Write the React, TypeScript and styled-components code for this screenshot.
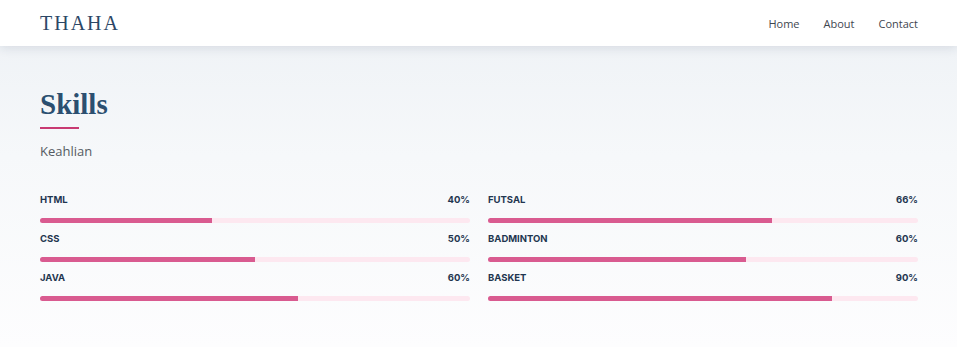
import styled, { createGlobalStyle } from 'styled-components';

// 스킬 목록 (bar 값은 화면에 보이는 막대 길이)
const SKILLS_LEFT = [
  { name: 'HTML', label: '40%', bar: 40 },
  { name: 'CSS', label: '50%', bar: 50 },
  { name: 'JAVA', label: '60%', bar: 60 },
];

const SKILLS_RIGHT = [
  { name: 'FUTSAL', label: '66%', bar: 66 },
  { name: 'BADMINTON', label: '60%', bar: 60 },
  { name: 'BASKET', label: '90%', bar: 80 },
];

const NAV_ITEMS = ['Home', 'About', 'Contact'];

const GlobalStyle = createGlobalStyle`
  html, body {
    margin: 0;
    padding: 0;
    background: #ffffff;
  }
  * {
    box-sizing: border-box;
  }
`;

function SkillColumn({ skills }: { skills: { name: string; label: string; bar: number }[] }) {
  return (
    <Column>
      {skills.map((skill) => (
        <SkillItem key={skill.name}>
          <SkillHead>
            <SkillName>{skill.name}</SkillName>
            <SkillValue>{skill.label}</SkillValue>
          </SkillHead>
          <Track>
            <Fill style={{ width: `${skill.bar}%` }} />
          </Track>
        </SkillItem>
      ))}
    </Column>
  );
}

export default function App() {
  return (
    <Page>
      <GlobalStyle />
      {/* 상단 헤더 */}
      <Header>
        <Logo>THAHA</Logo>
        <Nav>
          {NAV_ITEMS.map((item) => (
            <NavLink key={item}>{item}</NavLink>
          ))}
        </Nav>
      </Header>

      {/* 스킬 섹션 */}
      <Section>
        <Title>Skills</Title>
        <TitleLine />
        <Subtitle>Keahlian</Subtitle>
        <Grid>
          <SkillColumn skills={SKILLS_LEFT} />
          <SkillColumn skills={SKILLS_RIGHT} />
        </Grid>
      </Section>
    </Page>
  );
}

const Page = styled.div`
  width: 957px;
  height: 347px;
  background: linear-gradient(180deg, #edf1f5 0%, #f6f8fa 45%, #fdfdfe 100%);
  overflow: hidden;
`;

const Header = styled.header`
  position: relative;
  z-index: 1;
  height: 46px;
  display: flex;
  align-items: center;
  justify-content: space-between;
  padding: 0 39px 0 40px;
  background: #ffffff;
  box-shadow: 0 2px 10px rgba(30, 50, 80, 0.12);
`;

const Logo = styled.div`
  font-family: 'Liberation Serif', 'DejaVu Serif', serif;
  font-size: 20px;
  letter-spacing: 2px;
  color: #2c4766;
  margin-top: 1px;
`;

const Nav = styled.nav`
  display: flex;
  gap: 24px;
`;

const NavLink = styled.a`
  font-family: 'Open Sans', 'Noto Sans', sans-serif;
  font-size: 11px;
  color: #3f4650;
  cursor: pointer;
`;

const Section = styled.section`
  padding: 40px 40px 0 40px;
`;

const Title = styled.h2`
  margin: 0;
  font-family: 'Liberation Serif', 'DejaVu Serif', serif;
  font-weight: 700;
  font-size: 29px;
  line-height: 36px;
  color: #2b4f70;
`;

const TitleLine = styled.div`
  width: 39px;
  height: 2px;
  margin-top: 5px;
  background: #c83a72;
`;

const Subtitle = styled.p`
  margin: 13px 0 0 0;
  font-family: 'Open Sans', 'Noto Sans', sans-serif;
  font-size: 13px;
  line-height: 18px;
  color: #555b62;
`;

const Grid = styled.div`
  display: grid;
  grid-template-columns: 430px 430px;
  column-gap: 18px;
  margin-top: 32px;
`;

const Column = styled.div`
  display: flex;
  flex-direction: column;
`;

const SkillItem = styled.div`
  height: 39px;
  display: flex;
  flex-direction: column;
`;

const SkillHead = styled.div`
  display: flex;
  justify-content: space-between;
  align-items: center;
  height: 14px;
`;

const SkillName = styled.span`
  font-family: 'Inter', 'Lato', sans-serif;
  font-weight: 700;
  font-size: 9.5px;
  color: #1f3650;
`;

const SkillValue = styled.span`
  font-family: 'Inter', 'Lato', sans-serif;
  font-weight: 700;
  font-size: 9.5px;
  color: #1f3650;
`;

const Track = styled.div`
  margin-top: 12px;
  height: 5px;
  border-radius: 3px;
  background: #fde8f0;
  overflow: hidden;
`;

const Fill = styled.div`
  height: 100%;
  background: #d95b90;
`;
